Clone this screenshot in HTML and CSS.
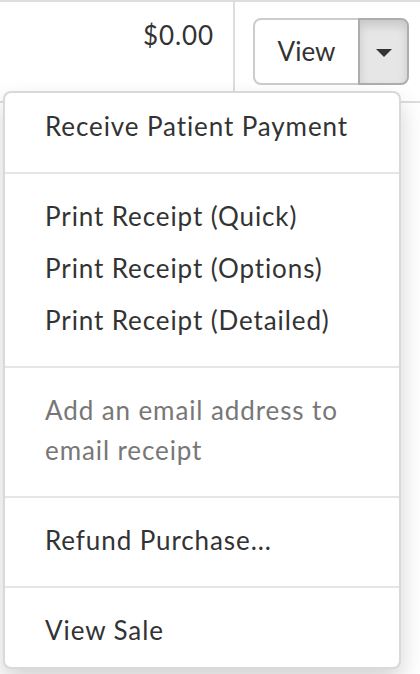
FILE: index.html
```html
<!DOCTYPE html>
<html lang="en">
<head>
<meta charset="utf-8">
<title>Sale actions</title>
<link rel="stylesheet" href="styles.css">
</head>
<body>
<div class="page">
  <div class="row">
    <div class="cell amount">$0.00</div>
    <div class="cell actions">
      <div class="btn-group">
        <button class="btn btn-view" type="button">View</button>
        <button class="btn btn-toggle" type="button" aria-label="More actions"><span class="caret"></span></button>
      </div>
    </div>
  </div>
  <ul class="menu">
    <li class="item">Receive Patient Payment</li>
    <li class="divider"></li>
    <li class="item">Print Receipt (Quick)</li>
    <li class="item">Print Receipt (Options)</li>
    <li class="item">Print Receipt (Detailed)</li>
    <li class="divider"></li>
    <li class="item disabled">Add an email address to email receipt</li>
    <li class="divider"></li>
    <li class="item">Refund Purchase...</li>
    <li class="divider"></li>
    <li class="item">View Sale</li>
  </ul>
</div>
</body>
</html>
```

FILE: styles.css
```css
* {
  box-sizing: border-box;
}

body {
  margin: 0;
  background: #fff;
  color: #333;
  font-family: Lato, "Liberation Sans", sans-serif;
  font-size: 26px;
  line-height: 40px;
  letter-spacing: 0.9px;
}

.page {
  position: relative;
  height: 674px;
  overflow: hidden;
}

.row {
  display: flex;
  height: 103px;
  border-top: 2px solid #dddddd;
  border-bottom: 2px solid #dddddd;
}

.amount {
  width: 235px;
  border-right: 2px solid #dddddd;
  text-align: right;
  padding: 13px 19px 0 0;
}

.actions {
  padding: 16px 0 0 18px;
}

.btn-group {
  display: flex;
  height: 67px;
}

.btn {
  font-family: inherit;
  font-size: 26px;
  line-height: 40px;
  letter-spacing: 0;
  color: #333;
  background: #fff;
  border: 2px solid #cccccc;
  margin: 0;
}

.btn-view {
  width: 107px;
  padding: 11px 0 12px;
  text-align: center;
  border-radius: 8px 0 0 8px;
}

.btn-toggle {
  width: 51px;
  margin-left: -2px;
  padding: 0;
  display: flex;
  align-items: center;
  justify-content: center;
  background: #e6e6e6;
  border-color: #adadad;
  border-radius: 0 8px 8px 0;
  box-shadow: inset 0 6px 10px rgba(0, 0, 0, 0.125);
}

.caret {
  width: 0;
  height: 0;
  margin-top: 2px;
  border-top: 8px solid #333;
  border-left: 8px solid transparent;
  border-right: 8px solid transparent;
}

.menu {
  position: absolute;
  top: 91px;
  left: 3px;
  width: 398px;
  margin: 0;
  padding: 7px 0 11px;
  list-style: none;
  background: #fff;
  border: 2px solid rgba(0, 0, 0, 0.15);
  border-radius: 8px;
  box-shadow: 0 12px 24px rgba(0, 0, 0, 0.175);
}

.item {
  padding: 6px 40px;
  color: #333;
}

.item.disabled {
  color: #777;
}

.divider {
  height: 2px;
  margin: 20px 0 16px;
  background: #e5e5e5;
}
```
